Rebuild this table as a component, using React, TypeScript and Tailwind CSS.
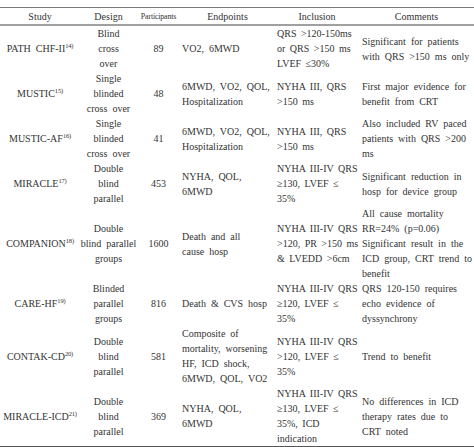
type Row = {
  study: string;
  ref: string;
  design: string[];
  n: string;
  endpoints: string[];
  inclusion: string[];
  comments: string[];
};

const rows: Row[] = [
  {
    study: 'PATH CHF-II',
    ref: '14)',
    design: ['Blind', 'cross', 'over'],
    n: '89',
    endpoints: ['VO2, 6MWD'],
    inclusion: ['QRS >120-150ms', 'or QRS >150 ms', 'LVEF ≤30%'],
    comments: ['Significant for patients', 'with QRS >150 ms only'],
  },
  {
    study: 'MUSTIC',
    ref: '15)',
    design: ['Single', 'blinded', 'cross over'],
    n: '48',
    endpoints: ['6MWD, VO2, QOL,', 'Hospitalization'],
    inclusion: ['NYHA III, QRS', '>150 ms'],
    comments: ['First major evidence for', 'benefit from CRT'],
  },
  {
    study: 'MUSTIC-AF',
    ref: '16)',
    design: ['Single', 'blinded', 'cross over'],
    n: '41',
    endpoints: ['6MWD, VO2, QOL,', 'Hospitalization'],
    inclusion: ['NYHA III, QRS', '>150 ms'],
    comments: ['Also included RV paced', 'patients with QRS >200', 'ms'],
  },
  {
    study: 'MIRACLE',
    ref: '17)',
    design: ['Double', 'blind', 'parallel'],
    n: '453',
    endpoints: ['NYHA, QOL,', '6MWD'],
    inclusion: ['NYHA III-IV QRS', '≥130, LVEF ≤', '35%'],
    comments: ['Significant reduction in', 'hosp for device group'],
  },
  {
    study: 'COMPANION',
    ref: '18)',
    design: ['Double', 'blind parallel', 'groups'],
    n: '1600',
    endpoints: ['Death and all', 'cause hosp'],
    inclusion: ['NYHA III-IV QRS', '>120, PR >150 ms', '& LVEDD >6cm'],
    comments: [
      'All cause mortality',
      'RR=24% (p=0.06)',
      'Significant result in the',
      'ICD group, CRT trend to',
      'benefit',
    ],
  },
  {
    study: 'CARE-HF',
    ref: '19)',
    design: ['Blinded', 'parallel', 'groups'],
    n: '816',
    endpoints: ['Death & CVS hosp'],
    inclusion: ['NYHA III-IV QRS', '≥120, LVEF ≤', '35%'],
    comments: ['QRS 120-150 requires', 'echo evidence of', 'dyssynchrony'],
  },
  {
    study: 'CONTAK-CD',
    ref: '20)',
    design: ['Double', 'blind', 'parallel'],
    n: '581',
    endpoints: ['Composite of', 'mortality, worsening', 'HF, ICD shock,', '6MWD, QOL, VO2'],
    inclusion: ['NYHA III-IV QRS', '>120, LVEF ≤', '35%'],
    comments: ['Trend to benefit'],
  },
  {
    study: 'MIRACLE-ICD',
    ref: '21)',
    design: ['Double', 'blind', 'parallel'],
    n: '369',
    endpoints: ['NYHA, QOL,', '6MWD'],
    inclusion: ['NYHA III-IV QRS', '≥130, LVEF ≤', '35%, ICD', 'indication'],
    comments: ['No differences in ICD', 'therapy rates due to', 'CRT noted'],
  },
];

const Lines = ({ lines }: { lines: string[] }) => (
  <>
    {lines.map((l, i) => (
      <div key={i} className="whitespace-nowrap">
        {l}
      </div>
    ))}
  </>
);

const App = () => {
  const th = 'border-t border-t-[#7a7a7a] border-b-2 border-b-[#a0a0a0] font-normal text-center leading-[15px] p-0';

  return (
    <div className="w-[474px] h-[447px] bg-white overflow-hidden pt-[7px]">
      <table
        className="w-[474px] table-fixed border-separate border-spacing-0 text-[10px] leading-[15px] text-[#333333] [word-spacing:2.5px]"
        style={{ fontFamily: '"Liberation Serif", "DejaVu Serif", serif' }}
      >
        <colgroup>
          <col className="w-[80px]" />
          <col className="w-[57px]" />
          <col className="w-[43px]" />
          <col className="w-[95px]" />
          <col className="w-[84px]" />
          <col className="w-[115px]" />
        </colgroup>
        <thead>
          <tr>
            <th className={th}>Study</th>
            <th className={th}>Design</th>
            <th className={th}>
              <span className="text-[8px] tracking-[-0.2px]">Participants</span>
            </th>
            <th className={th}>Endpoints</th>
            <th className={th}>Inclusion</th>
            <th className={th}>Comments</th>
          </tr>
        </thead>
        <tbody>
          {rows.map((r, i) => {
            const last = i === rows.length - 1;
            const td = `p-0 align-middle ${last ? 'border-b-4 border-b-[#555555]' : ''}`;
            return (
              <tr key={r.study}>
                <td className={`${td} text-center whitespace-nowrap`}>
                  {r.study}
                  <span className="text-[6.5px] leading-none align-[4px] tracking-[-0.2px]">{r.ref}</span>
                </td>
                <td className={`${td} text-center`}>
                  <Lines lines={r.design} />
                </td>
                <td className={`${td} text-center`}>{r.n}</td>
                <td className={`${td} pl-[2px]`}>
                  <Lines lines={r.endpoints} />
                </td>
                <td className={`${td} pl-[2px] [word-spacing:2px]`}>
                  <Lines lines={r.inclusion} />
                </td>
                <td className={`${td} pl-[3px]`}>
                  <Lines lines={r.comments} />
                </td>
              </tr>
            );
          })}
        </tbody>
      </table>
    </div>
  );
};

export default App;
